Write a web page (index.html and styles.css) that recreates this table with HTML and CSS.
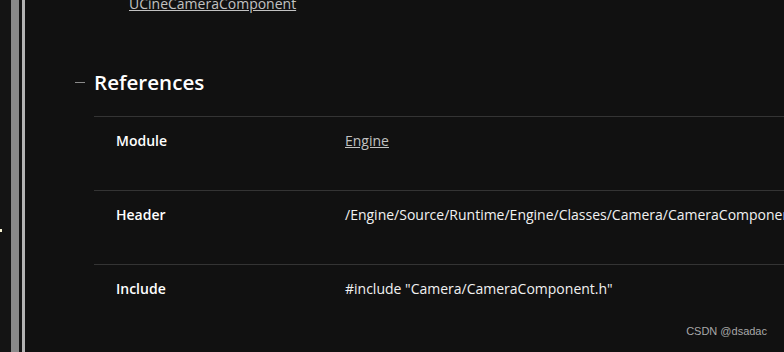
FILE: index.html
```html
<!DOCTYPE html>
<html>
<head>
<meta charset="utf-8">
<link rel="stylesheet" href="styles.css">
</head>
<body>
<div class="chrome">
  <div class="c-dark"><span class="tick"></span></div>
  <div class="c-gray"></div>
  <div class="c-gap"></div>
  <div class="c-light"></div>
</div>
<main class="main">
  <div class="toplink"><a href="#">UCineCameraComponent</a></div>
  <h2 class="heading"><span class="dash"></span>References</h2>
  <div class="table">
    <div class="row">
      <div class="label">Module</div>
      <div class="value"><a href="#">Engine</a></div>
    </div>
    <div class="row">
      <div class="label">Header</div>
      <div class="value">/Engine/Source/Runtime/Engine/Classes/Camera/CameraComponent.h</div>
    </div>
    <div class="row">
      <div class="label">Include</div>
      <div class="value">#include "Camera/CameraComponent.h"</div>
    </div>
  </div>
</main>
<div class="watermark">CSDN @dsadac</div>
</body>
</html>
```

FILE: styles.css
```css
html, body {
  margin: 0;
  padding: 0;
}
body {
  width: 784px;
  height: 352px;
  overflow: hidden;
  background: #111111;
  display: flex;
  position: relative;
  font-family: "Open Sans", "Noto Sans", sans-serif;
  color: #ffffff;
}
.chrome {
  flex: 0 0 25px;
  display: flex;
  height: 352px;
}
.c-dark {
  width: 11px;
  background: #141414;
  position: relative;
}
.tick {
  position: absolute;
  left: 0;
  top: 229px;
  width: 2px;
  height: 3px;
  background: #f4f0d0;
}
.c-gray {
  width: 8px;
  background: #8a8a8a;
}
.c-gap {
  width: 3px;
  background: #151515;
}
.c-light {
  width: 3px;
  background: #b3b3b3;
}
.main {
  flex: 1;
  padding-left: 69px;
  min-width: 0;
}
a {
  color: #c2c2c2;
  text-decoration: underline;
}
.toplink {
  margin-top: -6px;
  padding-left: 35px;
  font-size: 14px;
  line-height: 20px;
}
.heading {
  margin: 54px 0 0 -19px;
  display: flex;
  align-items: center;
  gap: 9px;
  font-size: 20.6px;
  line-height: 28px;
  font-weight: 600;
  color: #ffffff;
}
.dash {
  width: 10px;
  height: 1px;
  background: #8a8a8a;
}
.table {
  margin-top: 20px;
}
.row {
  display: flex;
  border-top: 1px solid #343434;
  height: 73px;
  box-sizing: content-box;
  font-size: 14px;
  line-height: 20px;
}
.label {
  flex: 0 0 229px;
  padding: 14px 0 0 22px;
  font-weight: 600;
  color: #ffffff;
}
.value {
  padding-top: 14px;
  white-space: nowrap;
  color: #f2f2f2;
}
.watermark {
  position: absolute;
  right: 17px;
  top: 325px;
  font-family: "Liberation Sans", Arial, sans-serif;
  font-size: 11px;
  line-height: 13px;
  color: #a8a8a8;
}
```
